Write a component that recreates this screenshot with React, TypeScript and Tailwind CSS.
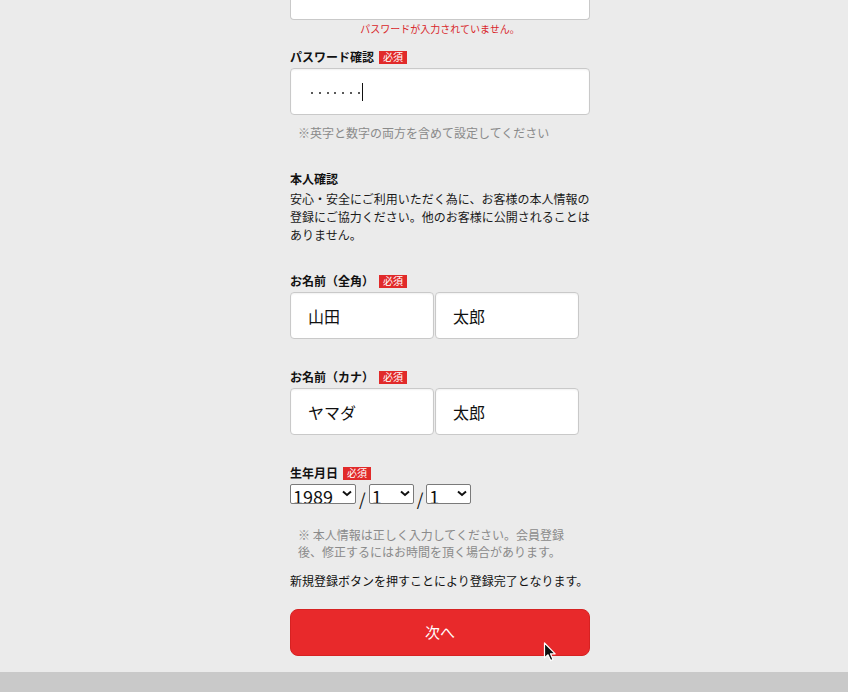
import React from "react";

const font = { fontFamily: '"Noto Sans CJK JP", "Noto Sans", sans-serif' };

function Badge() {
  return (
    <span className="inline-flex h-[13px] w-[28px] items-center justify-center bg-[#e12a2a] text-[10px] leading-none text-white">
      必須
    </span>
  );
}

function Label({ text }: { text: string }) {
  return (
    <div className="flex h-[18px] items-center gap-[5px]">
      <span className="text-[12px] font-bold leading-[18px] text-[#111]">{text}</span>
      <Badge />
    </div>
  );
}

function TextBox({ value, w }: { value: string; w: string }) {
  return (
    <div
      className={`${w} flex h-[47px] items-center rounded-[4px] border border-[#c9c9c9] bg-white pl-[17px] text-[16px] text-[#111] shadow-[inset_0_1px_2px_rgba(0,0,0,0.06)]`}
    >
      {value}
    </div>
  );
}

function Select({ value, w }: { value: string; w: string }) {
  return (
    <div
      className={`${w} relative h-[20px] overflow-hidden rounded-[2px] border border-[#7a7a7a] bg-white`}
    >
      <span className="absolute left-[2px] top-0 text-[18px] leading-[22px] text-[#111]">{value}</span>
      <svg className="absolute right-[3px] top-[5px]" width="10" height="7" viewBox="0 0 10 7">
        <path d="M1 1.5 L5 5 L9 1.5" fill="none" stroke="#111" strokeWidth="2" />
      </svg>
    </div>
  );
}

function Slash() {
  return <span className="mx-[3px] h-[20px] text-[17px] leading-[30px] text-[#111]">/</span>;
}

export default function App() {
  return (
    <div className="relative h-[692px] overflow-hidden bg-[#ebebeb]" style={font}>
      <div className="ml-[290px] w-[300px]">
        <div className="h-[20px] rounded-b-[4px] border border-t-0 border-[#c9c9c9] bg-white" />
        <p className="mt-[2px] text-center text-[10px] leading-[14px] text-[#d9262a]">
          パスワードが入力されていません。
        </p>

        <div className="mt-[12px]">
          <Label text="パスワード確認" />
        </div>
        <div className="mt-[2px] flex h-[47px] items-center rounded-[4px] border border-[#c9c9c9] bg-white pl-[20px] shadow-[inset_0_1px_2px_rgba(0,0,0,0.06)]">
          <div className="flex gap-[5.8px]">
            {[0, 1, 2, 3, 4, 5, 6].map((i) => (
              <span key={i} className="mt-[2px] h-[2px] w-[2px] rounded-full bg-[#222]" />
            ))}
          </div>
          <span className="ml-[2px] h-[18px] w-[1px] bg-[#111]" />
        </div>
        <p className="mt-[9px] pl-[8px] text-[12px] leading-[18px] text-[#8a8a8a]">
          ※英字と数字の両方を含めて設定してください
        </p>

        <p className="mt-[28px] text-[12px] font-bold leading-[18px] text-[#111]">本人確認</p>
        <p className="mt-[2px] text-[12px] leading-[18px] text-[#1a1a1a]">
          安心・安全にご利用いただく為に、お客様の本人情報の
          <br />
          登録にご協力ください。他のお客様に公開されることは
          <br />
          ありません。
        </p>

        <div className="mt-[28px]">
          <Label text="お名前（全角）" />
        </div>
        <div className="mt-[2px] flex gap-[1px]">
          <TextBox value="山田" w="w-[144px]" />
          <TextBox value="太郎" w="w-[144px]" />
        </div>

        <div className="mt-[29px]">
          <Label text="お名前（カナ）" />
        </div>
        <div className="mt-[2px] flex gap-[1px]">
          <TextBox value="ヤマダ" w="w-[144px]" />
          <TextBox value="太郎" w="w-[144px]" />
        </div>

        <div className="mt-[29px]">
          <Label text="生年月日" />
        </div>
        <div className="mt-[2px] flex h-[20px] items-start">
          <Select value="1989" w="w-[66px]" />
          <Slash />
          <Select value="1" w="w-[45px]" />
          <Slash />
          <Select value="1" w="w-[45px]" />
        </div>

        <p className="mt-[22px] pl-[8px] text-[12px] leading-[17px] text-[#8a8a8a]">
          ※ 本人情報は正しく入力してください。会員登録
          <br />
          後、修正するにはお時間を頂く場合があります。
        </p>

        <p className="mt-[12px] text-[12px] leading-[18px] text-[#111]">
          新規登録ボタンを押すことにより登録完了となります。
        </p>

        <button className="mt-[19px] flex h-[47px] w-[300px] items-center justify-center rounded-[8px] border border-[#d62222] bg-[#e8292b] text-[15px] text-white">
          次へ
        </button>
      </div>

      <div className="absolute bottom-0 left-0 h-[20px] w-full bg-[#c9c9c9]" />

      <svg className="absolute left-[543px] top-[642px]" width="14" height="21" viewBox="0 0 14 21">
        <path
          d="M1.5 1 L1.5 16 L5 12.8 L7.6 18.6 L10 17.5 L7.5 11.8 L12.2 11.8 Z"
          fill="#111"
          stroke="#fff"
          strokeWidth="1.2"
          strokeLinejoin="round"
        />
      </svg>
    </div>
  );
}
